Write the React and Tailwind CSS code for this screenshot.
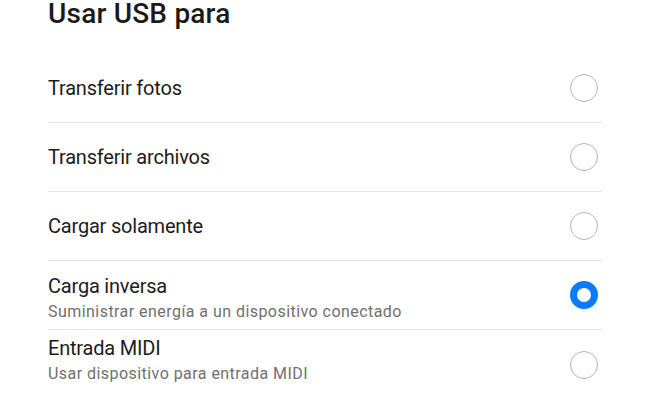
import React from 'react';

const options = [
  { title: 'Transferir fotos' },
  { title: 'Transferir archivos' },
  { title: 'Cargar solamente' },
  { title: 'Carga inversa', desc: 'Suministrar energía a un dispositivo conectado', selected: true, textClass: 'pt-[5px]' },
  { title: 'Entrada MIDI', desc: 'Usar dispositivo para entrada MIDI', textClass: 'pb-[9px]', last: true },
];

const Radio = ({ selected }) =>
  selected ? (
    <div className="w-7 h-7 rounded-full border-[7px] border-[#0a7cff] bg-white shrink-0" />
  ) : (
    <div className="w-7 h-7 rounded-full border-[1.5px] border-[#b3b3b3] bg-white shrink-0" />
  );

export default function App() {
  return (
    <div className="w-[650px] h-[406px] overflow-hidden bg-white px-12" style={{ fontFamily: 'Roboto, "Noto Sans", sans-serif' }}>
      <h1 className="text-[28px] leading-7 font-medium tracking-[0.2px] text-[#1a1a1a]">Usar USB para</h1>

      <div className="mt-[26px]">
        {options.map((o, i) => (
          <div
            key={i}
            className={`h-[69px] flex items-center justify-between pr-[4px] ${o.last ? '' : 'border-b border-[#e5e5e5]'}`}
          >
            <div className={o.textClass || ''}>
              <div className="text-[20px] leading-7 tracking-[-0.2px] text-[#1c1c1c]">{o.title}</div>
              {o.desc && <div className="text-[16px] leading-6 tracking-[0.45px] text-[#707070]">{o.desc}</div>}
            </div>
            <Radio selected={o.selected} />
          </div>
        ))}
      </div>
    </div>
  );
}
